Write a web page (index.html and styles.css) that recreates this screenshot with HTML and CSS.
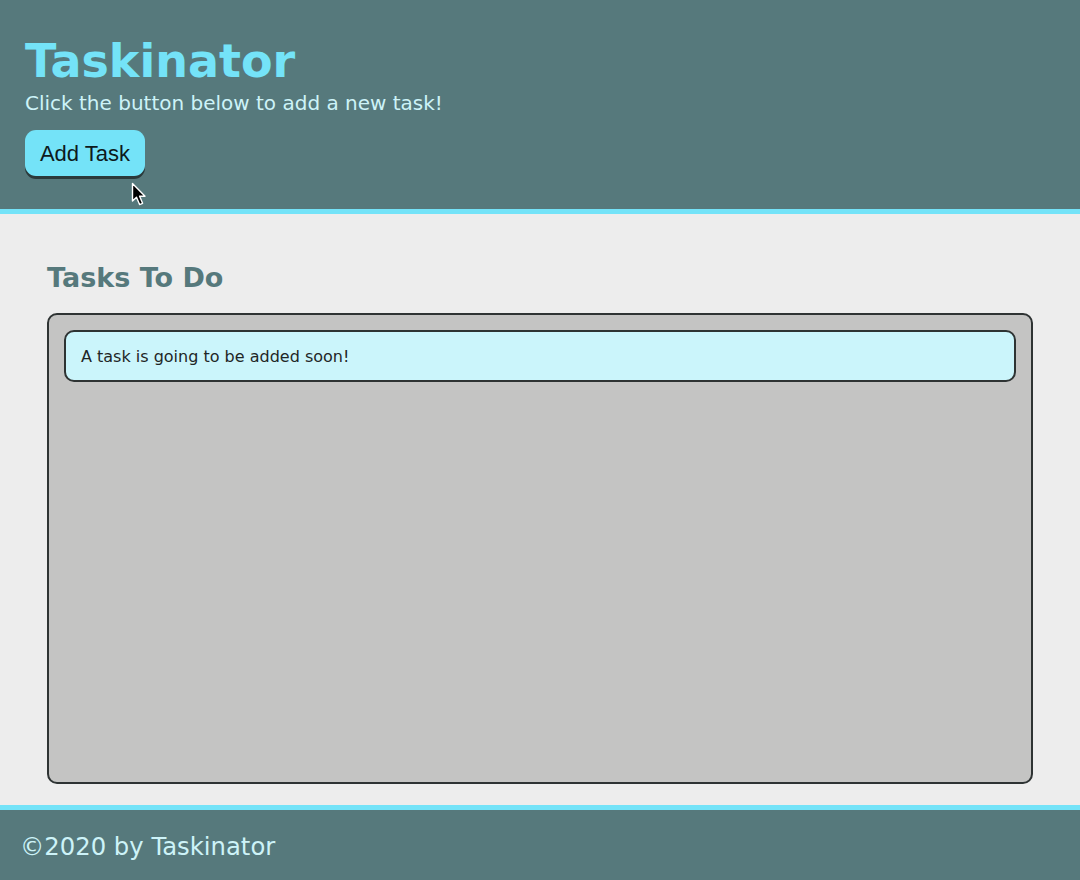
FILE: index.html
```html
<!DOCTYPE html>
<html>
<head>
<meta charset="utf-8">
<link rel="stylesheet" href="styles.css">
</head>
<body>
<header class="header">
  <h1 class="page-title">Taskinator</h1>
  <p class="subtitle">Click the button below to add a new task!</p>
  <button class="btn">Add Task</button>
  <svg class="cursor" width="17" height="26" viewBox="0 0 17 26"><path d="M1.5 1.5 L1.5 19 L5.5 15.2 L8.6 22.6 L11.6 21.3 L8.6 14.2 L14 14.2 Z" fill="#000" stroke="#fff" stroke-width="1.4" stroke-linejoin="round"/></svg>
</header>
<main class="page-content">
  <section class="task-list-wrapper">
    <h2 class="list-title">Tasks To Do</h2>
    <ul class="task-list">
      <li class="task-item">A task is going to be added soon!</li>
    </ul>
  </section>
</main>
<footer class="footer">
  <h3 class="footer-text">&copy;2020 by Taskinator</h3>
</footer>
</body>
</html>
```
FILE: styles.css
```css
* { box-sizing: border-box; }
html, body { margin: 0; padding: 0; }
body {
  font-family: "DejaVu Sans", Verdana, sans-serif;
  background: #ededed;
  height: 880px;
  display: flex;
  flex-direction: column;
}
.header {
  position: relative;
  background: #56797c;
  border-bottom: 5px solid #74e3f8;
  padding: 31px 25px 0;
  height: 214px;
}
.page-title {
  margin: 0;
  font-size: 46px;
  line-height: 60px;
  font-weight: bold;
  color: #74e3f8;
}
.subtitle {
  margin: 0;
  font-size: 20px;
  line-height: 24px;
  color: #cdf3f8;
}
.btn {
  margin-top: 15px;
  display: block;
  width: 120px;
  height: 46px;
  border: none;
  border-radius: 11px;
  background: #74e3f8;
  color: #0d1a1c;
  font-family: "Liberation Sans", Arial, sans-serif;
  font-size: 22px;
  box-shadow: 0 3px 0 #2b3a3b;
  padding: 1px 0 0;
}
.cursor {
  position: absolute;
  left: 131px;
  top: 182px;
}
.page-content {
  flex: 1;
  padding: 48px 47px 21px;
  display: flex;
  flex-direction: column;
}
.task-list-wrapper {
  flex: 1;
  display: flex;
  flex-direction: column;
}
.list-title {
  margin: 0 0 20px;
  font-size: 27px;
  line-height: 31px;
  font-weight: bold;
  color: #56797c;
}
.task-list {
  flex: 1;
  margin: 0;
  list-style: none;
  background: #c4c4c3;
  border: 2px solid #2e3333;
  border-radius: 10px;
  padding: 15px;
}
.task-item {
  background: #cbf5fb;
  border: 2px solid #2e3333;
  border-radius: 10px;
  height: 52px;
  padding: 0 15px;
  display: flex;
  align-items: center;
  font-size: 16px;
  color: #1f2626;
}
.footer {
  background: #56797c;
  border-top: 5px solid #74e3f8;
  height: 75px;
  padding: 2px 20px 0;
  display: flex;
  align-items: center;
}
.footer-text {
  margin: 0;
  font-size: 24.3px;
  font-weight: normal;
  color: #cdf3f8;
}
```
